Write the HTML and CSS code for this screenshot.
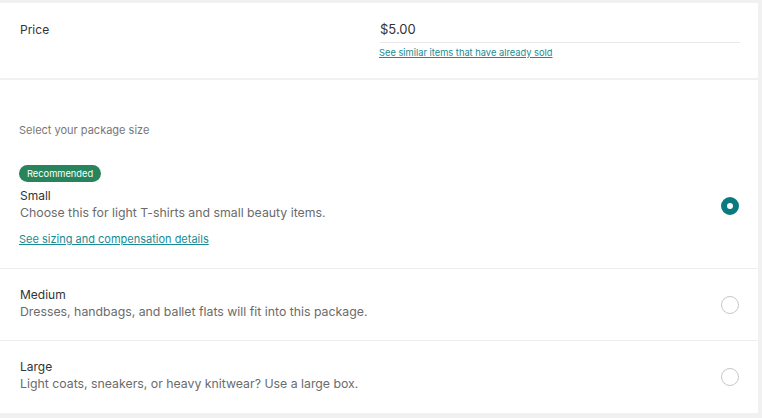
FILE: index.html
```html
<!DOCTYPE html>
<html lang="en">
<head>
<meta charset="utf-8">
<title>Package size</title>
<link rel="stylesheet" href="styles.css">
</head>
<body>
<div class="page">
  <section class="card price-card">
    <div class="price-label">Price</div>
    <div class="price-field">
      <div class="price-value">$5.00</div>
      <a class="link small-link" href="#">See similar items that have already sold</a>
    </div>
  </section>
  <section class="card package-card">
    <div class="package-header">Select your package size</div>
    <div class="option option-first">
      <div class="option-text">
        <span class="badge">Recommended</span>
        <div class="option-title">Small</div>
        <div class="option-desc">Choose this for light T-shirts and small beauty items.</div>
        <a class="link details-link" href="#">See sizing and compensation details</a>
      </div>
      <span class="radio radio-on"></span>
    </div>
    <div class="option">
      <div class="option-text">
        <div class="option-title">Medium</div>
        <div class="option-desc">Dresses, handbags, and ballet flats will fit into this package.</div>
      </div>
      <span class="radio"></span>
    </div>
    <div class="option">
      <div class="option-text">
        <div class="option-title">Large</div>
        <div class="option-desc">Light coats, sneakers, or heavy knitwear? Use a large box.</div>
      </div>
      <span class="radio"></span>
    </div>
  </section>
</div>
</body>
</html>
```
FILE: styles.css
```css
html, body {
  margin: 0;
  padding: 0;
  background: #f1f1f1;
  font-family: Inter, "Open Sans", "Liberation Sans", sans-serif;
  color: #333;
}
.page {
  padding: 3px 4px 0 0;
  display: flex;
  flex-direction: column;
  gap: 2px;
}
.card {
  background: #fff;
}
.price-card {
  display: grid;
  grid-template-columns: 1fr 1fr;
  height: 75px;
  box-sizing: border-box;
  padding: 18px 18px 0 20px;
}
.price-label {
  font-size: 12px;
  line-height: 16px;
  padding-top: 1px;
  color: #333;
}
.price-field {
  display: flex;
  flex-direction: column;
  align-items: flex-start;
}
.price-value {
  align-self: stretch;
  font-size: 13px;
  line-height: 17px;
  color: #333;
  padding-bottom: 4px;
  border-bottom: 1px solid #e8e8e8;
}
.link {
  color: #1a8a94;
  text-decoration: underline;
}
.small-link {
  font-size: 9.3px;
  line-height: 11px;
  margin-top: 4px;
  margin-left: -1px;
}
.package-card {
  height: 333px;
  display: flex;
  flex-direction: column;
}
.package-header {
  font-size: 11px;
  line-height: 14px;
  color: #777;
  padding: 43px 19px 0;
  height: 67px;
  box-sizing: border-box;
  flex: none;
}
.option {
  display: flex;
  align-items: center;
  justify-content: space-between;
  height: 72px;
  box-sizing: border-box;
  padding: 0 19px 0 20px;
  border-bottom: 1px solid #eeeeee;
  flex: none;
}
.option:last-child {
  border-bottom: none;
}
.option-text {
  align-self: flex-start;
  padding-top: 18px;
  display: flex;
  flex-direction: column;
  align-items: flex-start;
}
.option-first {
  height: 122px;
}
.option-first .radio {
  margin-bottom: 4px;
}
.badge {
  display: block;
  background: #27845c;
  color: #fff;
  font-size: 9.3px;
  line-height: 17px;
  padding: 0 8px;
  border-radius: 9px;
  margin-left: -1px;
  margin-bottom: 6px;
}
.option-title {
  font-size: 12px;
  line-height: 16px;
  color: #333;
}
.option-desc {
  font-size: 12.3px;
  line-height: 16px;
  color: #6b6b6b;
  margin-top: 1px;
}
.details-link {
  font-size: 11px;
  line-height: 14px;
  margin-top: 11px;
  margin-left: -1px;
}
.radio {
  width: 18px;
  height: 18px;
  box-sizing: border-box;
  border-radius: 50%;
  border: 1.5px solid #c8c8c8;
  background: #fff;
  flex: none;
}
.radio-on {
  border: 6px solid #0a7a80;
}
```
